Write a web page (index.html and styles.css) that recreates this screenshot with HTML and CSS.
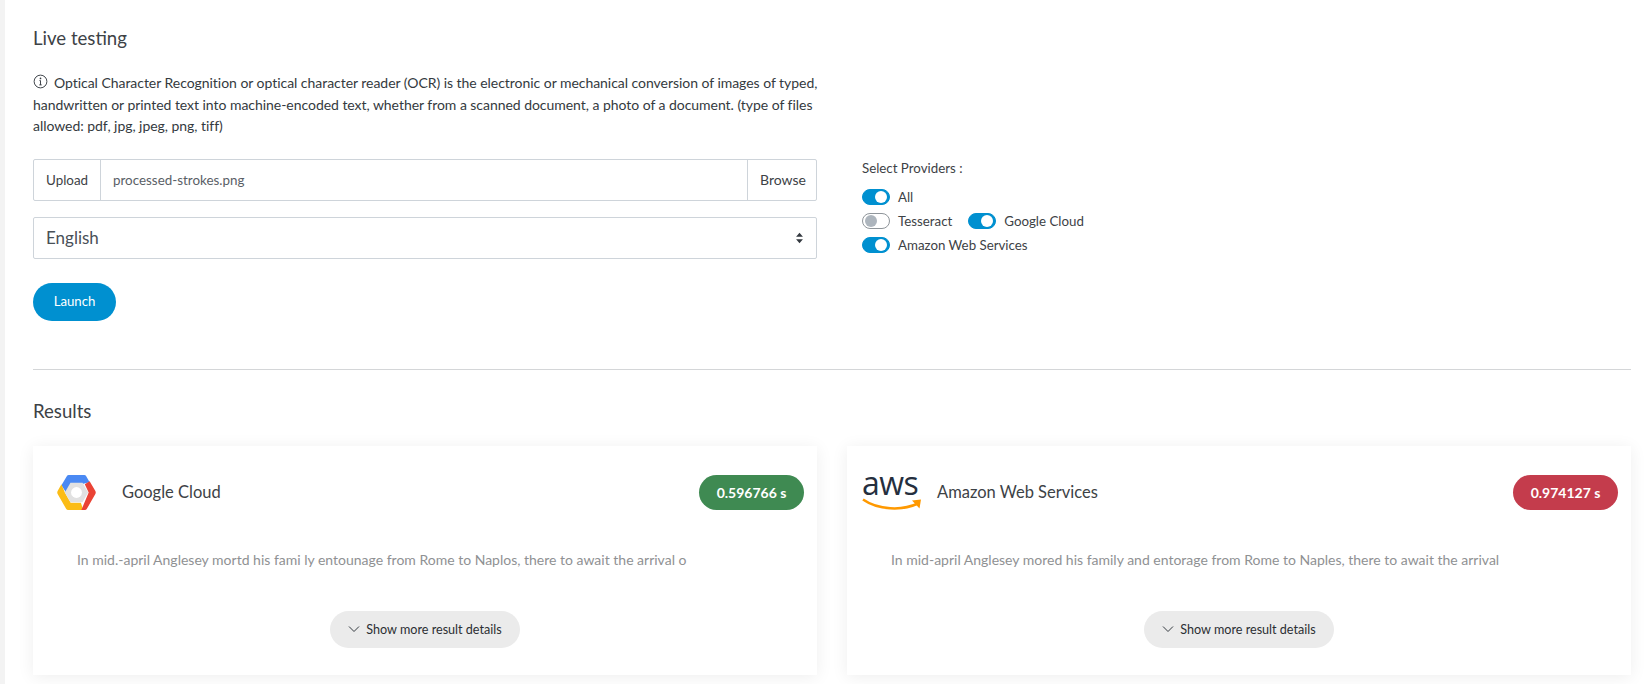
FILE: index.html
```html
<!DOCTYPE html>
<html lang="en">
<head>
<meta charset="utf-8">
<title>Live testing</title>
<link rel="stylesheet" href="styles.css">
</head>
<body>
<main class="page">
  <h2 class="title">Live testing</h2>
  <p class="intro"><svg class="info" viewBox="0 0 16 16"><circle cx="8" cy="8" r="6.8"/><path d="M8 7v4.6M6.7 11.6h2.6M6.9 7h1.1"/><circle class="dot" cx="8" cy="4.7" r=".9"/></svg>Optical Character Recognition or optical character reader (OCR) is the electronic or mechanical conversion of images of typed, handwritten or printed text into machine-encoded text, whether from a scanned document, a photo of a document. (type of files allowed: pdf, jpg, jpeg, png, tiff)</p>
  <section class="form-row">
    <div class="form-col">
      <div class="file">
        <span class="file-label">Upload</span>
        <span class="file-name">processed-strokes.png</span>
        <span class="file-browse">Browse</span>
      </div>
      <div class="select">
        <span class="select-value">English</span>
        <svg class="sort" viewBox="0 0 10 14"><path d="M5 1l4 4.6H1zM5 13L1 8.4h8z"/></svg>
      </div>
      <button class="launch">Launch</button>
    </div>
    <div class="providers">
      <div class="providers-label">Select Providers :</div>
      <div class="toggle-row"><label class="opt"><span class="switch on"></span>All</label></div>
      <div class="toggle-row"><label class="opt"><span class="switch"></span>Tesseract</label><label class="opt"><span class="switch on"></span>Google Cloud</label></div>
      <div class="toggle-row"><label class="opt"><span class="switch on"></span>Amazon Web Services</label></div>
    </div>
  </section>
  <hr class="divider">
  <h2 class="title results-title">Results</h2>
  <section class="cards">
    <article class="card">
      <header class="card-head">
        <svg class="gc-logo" viewBox="0 0 40 36">
          <path fill="#4a89f3" d="M10 1.200Q10.700 0 12 0h16q1.300 0 2 1.200L33.500 7.500 27 9H14l-4.500 9.500-5-8z"/>
          <path fill="#fbbc16" d="M4.500 9.500 0.600 16.500q-.8 1.500 0 3L9.300 34.800Q10 36 11.500 36H27l-2.500-7.500H14L8 18z"/>
          <path fill="#ea4335" d="M33.500 6.500 39.400 16.500q.8 1.500 0 3L30.700 34.800Q30 36 28.500 36H25l7.500-18-4-8.500z"/>
          <path fill="#e1e1e1" d="M8 18 13.800 8h12.400L32 18l-5.800 10H13.800z"/>
          <circle fill="#fff" cx="20" cy="18" r="5.600"/>
        </svg>
        <span class="provider">Google Cloud</span>
        <span class="badge good">0.596766 s</span>
      </header>
      <p class="result">In mid.-april Anglesey mortd his fami ly entounage from Rome to Naplos, there to await the arrival o</p>
      <div class="more-wrap"><button class="more"><svg class="chev" viewBox="0 0 12 8"><path d="M1 1.500l5 5 5-5"/></svg>Show more result details</button></div>
    </article>
    <article class="card">
      <header class="card-head aws-head">
        <div class="aws-logo">
          <span class="aws-word">aws</span>
          <svg class="aws-smile" viewBox="0 0 60 13"><path class="arc" d="M1 1.500C16 12 40 13 56 5.500"/><path class="tip" d="M50 2.500l9-1-1.500 9z"/></svg>
        </div>
        <span class="provider">Amazon Web Services</span>
        <span class="badge bad">0.974127 s</span>
      </header>
      <p class="result">In mid-april Anglesey mored his family and entorage from Rome to Naples, there to await the arrival</p>
      <div class="more-wrap"><button class="more"><svg class="chev" viewBox="0 0 12 8"><path d="M1 1.500l5 5 5-5"/></svg>Show more result details</button></div>
    </article>
  </section>
</main>
</body>
</html>
```

FILE: styles.css
```css
* { box-sizing: border-box; }
html, body { margin: 0; height: 684px; overflow: hidden; background: #fff; }
body { font-family: "Lato", "Noto Sans", sans-serif; color: #343a40; font-size: 14px; }
.page { height: 684px; border-left: 5px solid #f3f3f3; padding: 26px 13px 0 28px; }
.title { margin: 0; font-size: 18.600px; font-weight: 400; line-height: 24px; color: #3d4246; }
.intro { margin: 22px 0 0; width: 786px; font-size: 14px; line-height: 21.500px; letter-spacing: -.04px; color: #343a40; }
.info { width: 15px; height: 15px; margin-right: 6px; vertical-align: -1px; fill: none; stroke: #343a40; stroke-width: 1; }
.info .dot { fill: #343a40; stroke: none; }
.form-row { display: grid; grid-template-columns: 784px 1fr; column-gap: 30px; margin-top: 22px; }
.form-col { display: flex; flex-direction: column; align-items: flex-start; }
.file { display: flex; width: 100%; height: 42px; border: 1px solid #ced4da; border-radius: 2px; line-height: 40px; font-size: 13.400px; }
.file-label { width: 67px; padding-left: 12px; border-right: 1px solid #ced4da; color: #3d4246; }
.file-name { flex: 1; padding-left: 12px; color: #5a6066; }
.file-browse { width: 69px; padding-left: 12px; border-left: 1px solid #ced4da; color: #3d4246; font-size: 14px; }
.select { display: flex; align-items: center; justify-content: space-between; width: 100%; height: 42px; margin-top: 16px; padding: 0 12px; border: 1px solid #ced4da; border-radius: 2px; font-size: 17px; color: #495057; }
.select-value { padding-bottom: 1px; }
.sort { width: 9px; height: 12px; fill: #343a40; }
.launch { width: 83px; height: 38px; margin-top: 24px; padding: 0 0 2px; border: 0; border-radius: 19px; background: #0090d0; color: #fff; font: inherit; font-size: 13.200px; }
.providers { padding: 0 0 0 15px; }
.providers-label { margin: 0; line-height: 18px; font-size: 13.300px; color: #3d4246; }
.toggle-row { display: flex; gap: 16px; height: 24px; align-items: center; }
.providers-label + .toggle-row { margin-top: 8px; }
.opt { display: inline-flex; align-items: center; gap: 8px; font-size: 13.300px; color: #3d4246; }
.switch { position: relative; display: block; width: 28px; height: 16px; border: 1px solid #8f959a; border-radius: 8px; background: #fff; }
.switch::after { content: ""; position: absolute; left: 2px; top: 1px; width: 12px; height: 12px; border-radius: 50%; background: #adb5bd; }
.switch.on { border-color: #0090d0; background: #0090d0; }
.switch.on::after { left: 12px; background: #fff; }
.divider { margin: 48px 0 0; border: 0; border-top: 1px solid #d4d6d8; }
.results-title { margin-top: 29px; }
.cards { display: grid; grid-template-columns: 784px 784px; column-gap: 30px; margin-top: 23px; }
.card { height: 229px; padding: 29px 13px 0 24px; background: #fff; box-shadow: 0 2px 16px rgba(0, 0, 0, .07); }
.card-head { display: flex; align-items: center; height: 35px; }
.gc-logo { width: 39px; height: 35px; margin-right: 26px; }
.aws-head { margin-left: -9px; }
.aws-logo { position: relative; width: 60px; height: 42px; margin-right: 15px; }
.aws-word { display: block; font-family: "Open Sans", sans-serif; font-size: 32px; line-height: 30px; letter-spacing: -.5px; font-weight: 500; color: #252f3e; text-align: center; margin: -3px 4px 0 0; }
.aws-smile { position: absolute; left: 0; top: 27px; width: 60px; height: 13px; }
.aws-smile .arc { fill: none; stroke: #f90; stroke-width: 2.500; }
.aws-smile .tip { fill: #f90; }
.provider { font-size: 16.500px; color: #3d4246; }
.badge { margin-left: auto; width: 105px; height: 35px; border-radius: 18px; color: #fff; font-size: 14px; font-weight: 700; line-height: 35px; text-align: center; }
.badge.good { background: #3f8a52; }
.badge.bad { background: #c43c4c; }
.result { margin: 40px 0 0 20px; font-size: 14px; line-height: 20px; color: #8f9193; white-space: nowrap; }
.more-wrap { display: flex; justify-content: center; margin: 41px 0 0 -11px; }
.more { display: flex; align-items: center; gap: 6px; height: 37px; padding: 0 18px; border: 0; border-radius: 19px; background: #ebebeb; color: #2b2f33; font: inherit; font-size: 12.600px; }
.chev { width: 12px; height: 8px; fill: none; stroke: #343a40; stroke-width: 1; }
```
